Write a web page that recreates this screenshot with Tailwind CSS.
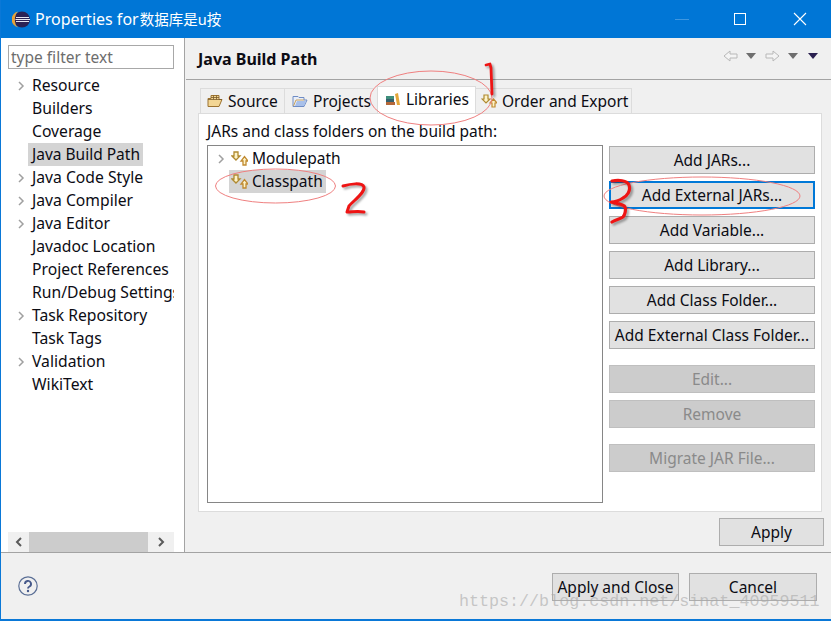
<!DOCTYPE html>
<html><head><meta charset="utf-8"><script src="https://cdn.jsdelivr.net/npm/@tailwindcss/browser@4"></script></head>
<body class="m-0 overflow-hidden bg-white">
<div class="relative w-[831px] h-[621px] flex flex-col bg-[#f0f0f0] border-l border-b-2 border-[#0a78d7] text-[15.5px] leading-[23px] text-[#0c0c14] font-['Noto_Sans','Open_Sans',sans-serif]">
  <!-- title bar -->
  <div class="h-[38px] shrink-0 bg-[#0076d6] flex items-center pl-[11px] text-white">
    <svg width="19" height="19" viewBox="0 0 19 19" class="shrink-0"><circle cx="10" cy="9.500" r="8" fill="#2c2255"/><path d="M6 1.500a8.200 8.200 0 0 0 0 16a9 9 0 0 1-3-8a9 9 0 0 1 3-8z" fill="#e8a33a"/><path d="M4 7.500h13M3.500 9.500h14.500M4 11.500h13" stroke="#e6e6f0" stroke-width="1.200"/></svg>
    <span class="ml-[4px] text-[16px] whitespace-nowrap font-['Noto_Sans','Noto_Sans_CJK_SC',sans-serif]">Properties for <span class="text-[14.500px] ml-[-3px]">数据库是u按</span></span>
    <div class="ml-auto flex items-center">
      <div class="w-[14px] h-px bg-[#3f97e0] mr-[45px]"></div>
      <div class="w-[12px] h-[12px] border border-white mr-[47px]"></div>
      <svg width="14" height="14" viewBox="0 0 14 14" class="mr-[24px]"><path d="M1 1l12 12M13 1L1 13" stroke="#fff" stroke-width="1.100"/></svg>
    </div>
  </div>
  <!-- body -->
  <div class="flex-1 flex min-h-0">
    <!-- left pane -->
    <div class="w-[184px] shrink-0 bg-white border-r border-[#a3a3a3] flex flex-col px-[7px] pt-[7px]">
      <div class="w-[166px] h-[24px] border border-[#a8a8a8] px-[2px] flex items-center text-[#6d6d6d]">type filter text</div>
      <div class="mt-[5px] w-[166px] flex flex-col flex-1 whitespace-nowrap overflow-hidden text-[15.700px]">
        <div class="h-[23px] flex items-center"><svg width="24" height="23" viewBox="0 0 24 23" class="shrink-0"><path d="M11 8l4 4-4 4" fill="none" stroke="#a0a0a0" stroke-width="1.500"/></svg><span>Resource</span></div>
        <div class="h-[23px] flex items-center pl-[24px]">Builders</div>
        <div class="h-[23px] flex items-center pl-[24px]">Coverage</div>
        <div class="h-[23px] flex items-center pl-[20px]"><span class="bg-[#d4d4d4] h-[23px] pl-[3px] pr-[3px] text-[15.500px]"><span class="ml-px">Java Build Path</span></span></div>
        <div class="h-[23px] flex items-center"><svg width="24" height="23" viewBox="0 0 24 23" class="shrink-0"><path d="M11 8l4 4-4 4" fill="none" stroke="#a0a0a0" stroke-width="1.500"/></svg><span>Java Code Style</span></div>
        <div class="h-[23px] flex items-center"><svg width="24" height="23" viewBox="0 0 24 23" class="shrink-0"><path d="M11 8l4 4-4 4" fill="none" stroke="#a0a0a0" stroke-width="1.500"/></svg><span>Java Compiler</span></div>
        <div class="h-[23px] flex items-center"><svg width="24" height="23" viewBox="0 0 24 23" class="shrink-0"><path d="M11 8l4 4-4 4" fill="none" stroke="#a0a0a0" stroke-width="1.500"/></svg><span>Java Editor</span></div>
        <div class="h-[23px] flex items-center pl-[24px]">Javadoc Location</div>
        <div class="h-[23px] flex items-center pl-[24px]">Project References</div>
        <div class="h-[23px] flex items-center pl-[24px]">Run/Debug Settings</div>
        <div class="h-[23px] flex items-center"><svg width="24" height="23" viewBox="0 0 24 23" class="shrink-0"><path d="M11 8l4 4-4 4" fill="none" stroke="#a0a0a0" stroke-width="1.500"/></svg><span>Task Repository</span></div>
        <div class="h-[23px] flex items-center pl-[24px]">Task Tags</div>
        <div class="h-[23px] flex items-center"><svg width="24" height="23" viewBox="0 0 24 23" class="shrink-0"><path d="M11 8l4 4-4 4" fill="none" stroke="#a0a0a0" stroke-width="1.500"/></svg><span>Validation</span></div>
        <div class="h-[23px] flex items-center pl-[24px]">WikiText</div>
      </div>
      <div class="w-[166px] h-[20px] bg-[#f0f0f0] flex items-center justify-between">
        <svg width="21" height="20" viewBox="0 0 21 20"><path d="M13 6l-4 4 4 4" fill="none" stroke="#5a5a5a" stroke-width="2"/></svg>
        <div class="w-[119px] h-[20px] bg-[#cccccc]"></div>
        <svg width="26" height="20" viewBox="0 0 26 20"><path d="M11 6l4 4-4 4" fill="none" stroke="#5a5a5a" stroke-width="2"/></svg>
      </div>
    </div>
    <!-- right pane -->
    <div class="flex-1 min-w-0 flex flex-col">
      <div class="ml-px h-[42px] shrink-0 border-b border-[#a3a3a3] flex items-center pl-[12px] pr-[13px]">
        <span class="font-bold text-[16px] mt-[1px]">Java Build Path</span>
        <div class="ml-auto flex items-center mt-[-5px]">
          <svg width="15" height="12" viewBox="0 0 15 12"><path d="M7 1L1 6l6 5V8h7V4H7z" fill="#f4f4f4" stroke="#b8b8b8"/></svg>
          <svg width="10" height="6" viewBox="0 0 10 6" class="ml-[8px]"><path d="M0 0h10L5 6z" fill="#6e6e6e"/></svg>
          <svg width="15" height="12" viewBox="0 0 15 12" class="ml-[9px]"><path d="M8 1l6 5-6 5V8H1V4h7z" fill="#f4f4f4" stroke="#b8b8b8"/></svg>
          <svg width="10" height="6" viewBox="0 0 10 6" class="ml-[8px]"><path d="M0 0h10L5 6z" fill="#6e6e6e"/></svg>
          <svg width="10" height="6" viewBox="0 0 10 6" class="ml-[10px]"><path d="M0 0h10L5 6z" fill="#2a2050"/></svg>
        </div>
      </div>
      <div class="pl-[13px] pr-[9px] flex-1 flex flex-col min-h-0">
        <!-- tabs -->
        <div class="h-[27px] pl-[2px] flex items-end shrink-0 mt-[6px] whitespace-nowrap">
          <div class="w-[85px] h-[25px] border border-b-0 border-[#dcdcdc] flex items-center pl-[6px] gap-[5px]">
            <svg width="16" height="14" viewBox="0 0 16 14" class="shrink-0"><path d="M1 12.500V4.500h3v-3h8v4h3l-3 7z" fill="#f3d694" stroke="#9c7330"/><path d="M6.500 1.500v4M9.500 1.500v4M4 3.500h8M1 5.500h14" stroke="#7a5a28" stroke-width=".8" fill="none"/></svg>
            <span>Source</span>
          </div>
          <div class="w-[88px] h-[25px] border-t border-[#dcdcdc] flex items-center pl-[7px] gap-[5px]">
            <svg width="16" height="14" viewBox="0 0 16 14" class="shrink-0"><path d="M1 12.500V2.500h5l1 1h5v2.500h3l-3 6.500z" fill="#e9eef8" stroke="#6f8cc4"/><path d="M1.500 12l2.500-6h8" stroke="#c9a25c" fill="none"/><path d="M3 12l2-5h9l-2 5z" fill="#a8c0ea"/></svg>
            <span>Projects</span>
          </div>
          <div class="w-[4px]"></div>
          <div class="w-[99px] h-[27px] bg-white border-x border-t border-[#dcdcdc] flex items-center pl-[7px] gap-[5px] pb-[2px]">
            <svg width="16" height="14" viewBox="0 0 16 14" class="shrink-0"><path d="M1 4h8v3H1z" fill="#3f8f7c"/><path d="M1 7h8v3H1z" fill="#35606d"/><path d="M1 10h9v3H1z" fill="#b4683a"/><path d="M10 2l3-1 2 12h-3z" fill="#e3a63a"/></svg>
            <span>Libraries</span>
          </div>
          <div class="w-[156px] h-[25px] border-r border-t border-[#dcdcdc] flex items-center pl-[5px] gap-[5px]">
            <svg width="16" height="14" viewBox="0 0 16 14" class="shrink-0"><path d="M3 1h4v4h2L5 9 1 5h2z" fill="#fdf3c8" stroke="#b08a30" stroke-width="1.200"/><path d="M11 13V9H9l3.500-4L16 9h-2v4z" fill="#fdf3c8" stroke="#c08a30" stroke-width="1.200"/></svg>
            <span>Order and Export</span>
          </div>
        </div>
        <!-- page -->
        <div class="h-[399px] shrink-0 bg-white border border-[#dcdcdc] pl-[8px] pr-[6px] flex flex-col">
          <div class="h-[31px] flex items-center pt-[3px]">JARs and class folders on the build path:</div>
          <div class="flex flex-1 min-h-0 pb-[8px]">
            <div class="w-[396px] h-[358px] shrink-0 border border-[#868686] pt-[1px] flex flex-col pl-[8px]">
              <div class="h-[23px] flex items-center">
                <svg width="14" height="23" viewBox="0 0 14 23" class="shrink-0"><path d="M3 8l4 4-4 4" fill="none" stroke="#a0a0a0" stroke-width="1.500"/></svg>
                <svg width="17" height="15" viewBox="0 0 17 15" class="shrink-0 ml-[1px]"><path d="M3 1h4v4h2L5 9 1 5h2z" fill="#fdf3c8" stroke="#b08a30" stroke-width="1.300"/><path d="M12 14v-4h-2l3.500-4.500L17 10h-2v4z" fill="#fdf3c8" stroke="#c08a30" stroke-width="1.300"/></svg>
                <span class="ml-[4px]">Modulepath</span>
              </div>
              <div class="h-[23px] flex items-center pl-[13px]">
                <div class="bg-[#d4d4d4] h-[23px] flex items-center pl-[2px] pr-[3px]">
                  <svg width="17" height="15" viewBox="0 0 17 15" class="shrink-0"><path d="M3 1h4v4h2L5 9 1 5h2z" fill="#fdf3c8" stroke="#b08a30" stroke-width="1.300"/><path d="M12 14v-4h-2l3.500-4.500L17 10h-2v4z" fill="#fdf3c8" stroke="#c08a30" stroke-width="1.300"/></svg>
                  <span class="ml-[4px]">Classpath</span>
                </div>
              </div>
            </div>
            <div class="ml-[6px] w-[206px] shrink-0 pt-[1px] flex flex-col">
              <button class="h-[28px] shrink-0 bg-[#e1e1e1] border border-[#adadad]">Add JARs...</button>
              <button class="h-[28px] shrink-0 mt-[7px] bg-[#e1e1e1] border-2 border-[#0078d7]">Add External JARs...</button>
              <button class="h-[28px] shrink-0 mt-[7px] bg-[#e1e1e1] border border-[#adadad]">Add Variable...</button>
              <button class="h-[28px] shrink-0 mt-[7px] bg-[#e1e1e1] border border-[#adadad]">Add Library...</button>
              <button class="h-[28px] shrink-0 mt-[7px] bg-[#e1e1e1] border border-[#adadad]">Add Class Folder...</button>
              <button class="h-[28px] shrink-0 mt-[7px] bg-[#e1e1e1] border border-[#adadad] whitespace-nowrap">Add External Class Folder...</button>
              <button class="h-[28px] shrink-0 mt-[16px] bg-[#cccccc] border border-[#bfbfbf] text-[#8a8a8a]">Edit...</button>
              <button class="h-[28px] shrink-0 mt-[7px] bg-[#cccccc] border border-[#bfbfbf] text-[#8a8a8a]">Remove</button>
              <button class="h-[28px] shrink-0 mt-[16px] bg-[#cccccc] border border-[#bfbfbf] text-[#8a8a8a]">Migrate JAR File...</button>
            </div>
          </div>
        </div>
        <div class="flex justify-end mt-[6px] mr-[-2px]">
          <button class="w-[105px] h-[28px] bg-[#e1e1e1] border border-[#adadad]">Apply</button>
        </div>
      </div>
    </div>
  </div>
  <!-- footer -->
  <div class="h-[67px] shrink-0 border-t border-[#a3a3a3] flex items-center pl-[17px] pr-[14px] pt-[2px]">
    <svg width="20" height="20" viewBox="0 0 20 20" class="mt-[-2px]"><circle cx="10" cy="10" r="9.200" fill="none" stroke="#5b6f96" stroke-width="1.200"/><path d="M7 8a3 3 0 1 1 4.500 2.500C10.500 11 10 11.500 10 12.500" fill="none" stroke="#46598a" stroke-width="1.900"/><circle cx="10" cy="15" r="1.200" fill="#46598a"/></svg>
    <button class="ml-auto w-[127px] h-[28px] bg-[#e1e1e1] border border-[#adadad] whitespace-nowrap">Apply and Close</button>
    <button class="ml-[10px] w-[128px] h-[28px] bg-[#e1e1e1] border border-[#adadad]">Cancel</button>
  </div>
  <!-- annotations and watermark -->
  <svg class="absolute left-[-1px] top-0 pointer-events-none" width="831" height="621" viewBox="0 0 831 621" fill="none">
    <ellipse cx="431" cy="98" rx="61" ry="27" stroke="#ef8080" stroke-width="1"/>
    <ellipse cx="275.500" cy="186" rx="60" ry="17" stroke="#ef8080" stroke-width="1"/>
    <ellipse cx="702" cy="196" rx="98" ry="19" stroke="#ef8080" stroke-width="1"/>
    <g class="drop-shadow-[2px_2px_1px_rgba(0,0,0,0.35)]" stroke="#ee1414" stroke-linecap="round" stroke-linejoin="round">
      <path d="M486 65l4-1 1 4 1 26" stroke-width="2.800"/>
      <path d="M343 186c7-2 19-4 21 1 1 6-11 14-15 19l-2 6c5 0 11-1 17 0" stroke-width="3"/>
      <path d="M612 181c6-1 15-1 17 4 2 6-2 11-6 13-3 2-8 4-12 4 4 1 13 2 14 5 1 3 0 8-2 10-3 2-8 3-11 5" stroke-width="3.200"/>
    </g>
  </svg>
  <div class="absolute left-[458px] top-[590px] text-[16.700px] leading-[24px] text-[#a8a8a8]/60 font-['Liberation_Mono',monospace] whitespace-nowrap pointer-events-none">https://blog.csdn.net/sinat_40959511</div>
</div>
</body></html>
